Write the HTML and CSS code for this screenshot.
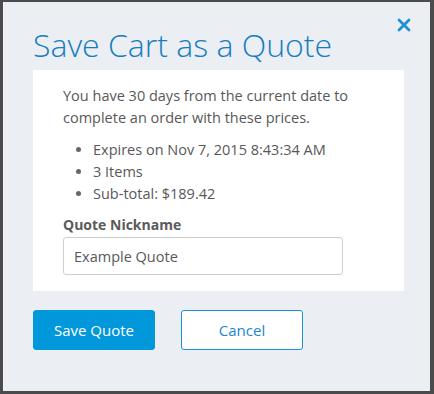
FILE: index.html
```html
<!DOCTYPE html>
<html>
<head>
<meta charset="utf-8">
<link rel="stylesheet" href="styles.css">
</head>
<body>
<div class="modal">
  <button class="close" aria-label="Close">
    <svg width="14" height="14" viewBox="0 0 14 14"><path d="M2 2 L12 12 M12 2 L2 12" stroke="#1d8fd7" stroke-width="2.8" stroke-linecap="round"/></svg>
  </button>
  <h1 class="title">Save Cart as a Quote</h1>
  <div class="panel">
    <p class="intro">You have 30 days from the current date to complete an order with these prices.</p>
    <ul class="facts">
      <li>Expires on Nov 7, 2015 8:43:34 AM</li>
      <li>3 Items</li>
      <li>Sub-total: $189.42</li>
    </ul>
    <label class="label" for="nick">Quote Nickname</label>
    <input id="nick" class="input" type="text" value="Example Quote">
  </div>
  <div class="actions">
    <button class="btn btn-primary">Save Quote</button>
    <button class="btn btn-outline">Cancel</button>
  </div>
</div>
</body>
</html>
```
FILE: styles.css
```css
html, body {
  margin: 0;
  padding: 0;
}
body {
  background: #4b4b4b;
  width: 434px;
  height: 394px;
  box-sizing: border-box;
  padding: 2px 4px 3px 3px;
  font-family: "Open Sans", "Liberation Sans", sans-serif;
  overflow: hidden;
}
.modal {
  position: relative;
  box-sizing: border-box;
  width: 427px;
  height: 389px;
  background: #ebeef3;
  border-left: 1px solid #f3f5f8;
  padding: 0 26px 0 29px;
}
.close {
  position: absolute;
  top: 15px;
  right: 18px;
  width: 16px;
  height: 16px;
  padding: 0;
  border: 0;
  background: none;
  display: flex;
  align-items: center;
  justify-content: center;
}
.title {
  margin: 0;
  padding-top: 25px;
  font-size: 32px;
  line-height: 36px;
  font-weight: 300;
  color: #167dc2;
  margin-bottom: 7px;
}
.panel {
  background: #fff;
  padding: 15px 30px 16px 30px;
  display: flex;
  flex-direction: column;
  align-items: flex-start;
}
.intro {
  margin: 0 0 10px 0;
  font-size: 14.5px;
  line-height: 22px;
  color: #585858;
}
.facts {
  margin: 0 0 9px 0;
  padding-left: 30px;
  font-size: 14.5px;
  line-height: 22px;
  color: #585858;
}
.facts li::marker {
  color: #666;
}
.label {
  font-size: 14px;
  line-height: 22px;
  font-weight: 700;
  color: #5a5a5a;
  margin-bottom: 1px;
}
.input {
  box-sizing: border-box;
  width: 280px;
  height: 38px;
  border: 1px solid #cfcfcf;
  border-radius: 3px;
  padding: 0 10px;
  font-family: inherit;
  font-size: 14.5px;
  color: #585858;
  outline: none;
}
.actions {
  display: flex;
  gap: 26px;
  margin-top: 19px;
}
.btn {
  box-sizing: border-box;
  width: 122px;
  height: 40px;
  border-radius: 3px;
  font-family: inherit;
  font-size: 15px;
  cursor: pointer;
}
.btn-primary {
  background: #0098db;
  border: 1px solid #0098db;
  color: #fff;
}
.btn-outline {
  background: #fff;
  border: 1px solid #1a92d8;
  color: #1a88d0;
}
```
